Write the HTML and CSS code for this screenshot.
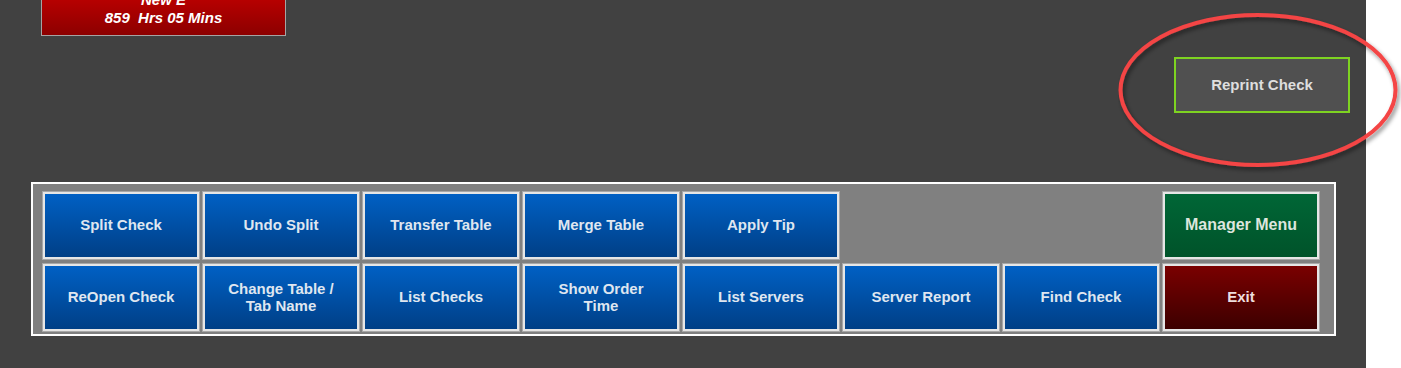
FILE: index.html
```html
<!DOCTYPE html>
<html>
<head>
<meta charset="utf-8">
<link rel="stylesheet" href="styles.css">
</head>
<body>
<div class="screen">
  <div class="timer">
    <span>New E</span>
    <span>859&nbsp; Hrs 05 Mins</span>
  </div>
  <div class="reprint-row">
    <div class="reprint">Reprint Check</div>
  </div>
  <div class="panel">
    <div class="btn blue">Split Check</div>
    <div class="btn blue">Undo Split</div>
    <div class="btn blue">Transfer Table</div>
    <div class="btn blue">Merge Table</div>
    <div class="btn blue">Apply Tip</div>
    <div class="spacer"></div>
    <div class="spacer"></div>
    <div class="btn green">Manager Menu</div>
    <div class="btn blue">ReOpen Check</div>
    <div class="btn blue">Change Table /<br>Tab Name</div>
    <div class="btn blue">List Checks</div>
    <div class="btn blue">Show Order<br>Time</div>
    <div class="btn blue">List Servers</div>
    <div class="btn blue">Server Report</div>
    <div class="btn blue">Find Check</div>
    <div class="btn red">Exit</div>
  </div>
</div>
<svg class="circle" width="300" height="180" viewBox="0 0 300 180">
  <defs>
    <filter id="sh" x="-10%" y="-10%" width="130%" height="130%">
      <feDropShadow dx="2" dy="3" stdDeviation="2" flood-color="#000" flood-opacity="0.45"/>
    </filter>
  </defs>
  <ellipse cx="140" cy="80" rx="137.5" ry="75" fill="none" stroke="#f44444" stroke-width="4" filter="url(#sh)"/>
</svg>
</body>
</html>
```
FILE: styles.css
```css
html, body {
  margin: 0;
  padding: 0;
  background: #ffffff;
  width: 1401px;
  height: 368px;
  overflow: hidden;
  position: relative;
}
.screen {
  width: 1366px;
  height: 368px;
  background: #414141;
  box-sizing: border-box;
  padding-left: 31px;
  font-family: "Liberation Sans", Arial, sans-serif;
  font-weight: bold;
  overflow: hidden;
}
.timer {
  margin-left: 10px;
  margin-top: -26px;
  width: 245px;
  height: 62px;
  box-sizing: border-box;
  border: 1px solid #a4a4a4;
  background: linear-gradient(#d40000, #8c0000);
  color: #ffffff;
  font-style: italic;
  font-size: 15px;
  line-height: 18px;
  display: flex;
  flex-direction: column;
  align-items: center;
  padding-top: 16px;
}
.reprint-row {
  display: flex;
  justify-content: flex-end;
  padding-right: 16px;
  margin-top: 21px;
}
.reprint {
  width: 176px;
  height: 56px;
  box-sizing: border-box;
  border: 2px solid #7ed321;
  background: #505050;
  color: #dedede;
  font-size: 15px;
  padding-bottom: 2px;
  display: flex;
  align-items: center;
  justify-content: center;
}
.panel {
  margin-top: 69px;
  width: 1305px;
  height: 154px;
  box-sizing: border-box;
  border: 2px solid #ffffff;
  background: #808080;
  padding: 8px 15px 3px 10px;
  display: grid;
  grid-template-columns: repeat(8, 156px);
  grid-template-rows: 67px 67px;
  column-gap: 4px;
  row-gap: 5px;
}
.btn {
  box-sizing: border-box;
  border: 2px solid #e6e6e6;
  box-shadow: 0 0 0 1px #a8a8a8;
  color: #dfe6f0;
  font-size: 15px;
  line-height: 17px;
  text-align: center;
  padding-bottom: 2px;
  display: flex;
  align-items: center;
  justify-content: center;
}
.blue {
  background: linear-gradient(#0060c4, #003f86);
}
.green {
  background: linear-gradient(#006636, #00532a);
  font-size: 16px;
  color: #dde6dd;
}
.red {
  background: linear-gradient(#7a0000, #3c0000);
  font-size: 15px;
  color: #eedede;
}
.circle {
  position: absolute;
  left: 1118px;
  top: 10px;
}
```
